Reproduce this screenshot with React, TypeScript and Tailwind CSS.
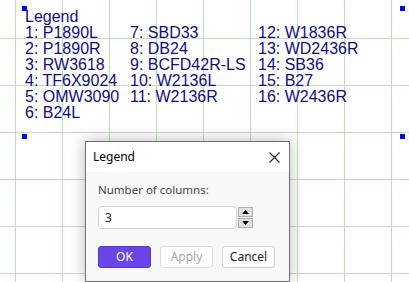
import React from "react";

const columns = [
  ["1: P1890L", "2: P1890R", "3: RW3618", "4: TF6X9024", "5: OMW3090", "6: B24L"],
  ["7: SBD33", "8: DB24", "9: BCFD42R-LS", "10: W2136L", "11: W2136R"],
  ["12: W1836R", "13: WD2436R", "14: SB36", "15: B27", "16: W2436R"],
];

function Handle({ className }: { className: string }) {
  return <div className={`absolute w-[5px] h-[5px] bg-[#0000ff] ${className}`} />;
}

function LegendBox() {
  return (
    <div className="absolute left-[22px] top-[6px] w-[383px] h-[133px]">
      <Handle className="left-0 top-0" />
      <Handle className="right-0 top-0" />
      <Handle className="left-0 bottom-0" />
      <Handle className="right-0 bottom-0" />
      <div className="pl-[3px] pt-[3px] text-[16px] leading-[16px] text-[#0e0e84] font-['Liberation_Sans',Arial,sans-serif]">
        <div>Legend</div>
        <div className="flex">
          <div className="w-[105px]">
            {columns[0].map((t) => (
              <div key={t} className="whitespace-nowrap">{t}</div>
            ))}
          </div>
          <div className="w-[128px]">
            {columns[1].map((t) => (
              <div key={t} className="whitespace-nowrap">{t}</div>
            ))}
          </div>
          <div>
            {columns[2].map((t) => (
              <div key={t} className="whitespace-nowrap">{t}</div>
            ))}
          </div>
        </div>
      </div>
    </div>
  );
}

function Spinner() {
  return (
    <div className="flex flex-col gap-px ml-px">
      <button className="w-[15px] h-[10px] bg-[#e1e1e1] border border-[#adadad] flex items-center justify-center">
        <svg width="7" height="4" viewBox="0 0 7 4">
          <path d="M3.5 0L7 4H0z" fill="#000" />
        </svg>
      </button>
      <button className="w-[15px] h-[10px] bg-[#e1e1e1] border border-[#adadad] flex items-center justify-center">
        <svg width="7" height="4" viewBox="0 0 7 4">
          <path d="M0 0H7L3.5 4z" fill="#000" />
        </svg>
      </button>
    </div>
  );
}

function Dialog() {
  return (
    <div className="absolute left-[85px] top-[141px] w-[205px] h-[141px] border border-[#707070] bg-[#f8f8f8] shadow-[0_0_14px_rgba(0,0,0,0.28)] font-['Noto_Sans',sans-serif] text-[12px] flex flex-col">
      <div className="h-[30px] bg-white flex items-center justify-between pl-[7px] pr-[9px]">
        <span className="text-[#000]">Legend</span>
        <svg width="11" height="11" viewBox="0 0 11 11">
          <path d="M0.5 0.5L10.5 10.5M10.5 0.5L0.5 10.5" stroke="#222" strokeWidth="1.1" fill="none" />
        </svg>
      </div>
      <div className="flex-1 pl-[12px] pt-[10px]">
        <div className="text-[#444] leading-[16px] text-[11.5px]">Number of columns:</div>
        <div className="flex items-center mt-[8px]">
          <div className="w-[139px] h-[23px] bg-white border border-[#d0d0d0] rounded-[4px] flex items-center pl-[6px] text-[#222]">
            3
          </div>
          <Spinner />
        </div>
        <div className="flex gap-[9px] mt-[17px]">
          <button className="w-[53px] h-[22px] rounded-[3px] bg-[#6a46e8] border border-[#5635c9] text-white">
            OK
          </button>
          <button className="w-[53px] h-[22px] rounded-[3px] bg-white border border-[#dcdcdc] text-[#a8a8a8]">
            Apply
          </button>
          <button className="w-[53px] h-[22px] rounded-[3px] bg-white border border-[#cfcfcf] text-[#222]">
            Cancel
          </button>
        </div>
      </div>
    </div>
  );
}

export default function App() {
  return (
    <div className="relative w-[409px] h-[282px] overflow-hidden bg-white bg-[linear-gradient(to_right,#bedcbe_1px,transparent_1px),linear-gradient(to_bottom,#bedcbe_1px,transparent_1px)] bg-size-[47px_47px] bg-position-[15px_38px]">
      <LegendBox />
      <Dialog />
    </div>
  );
}
